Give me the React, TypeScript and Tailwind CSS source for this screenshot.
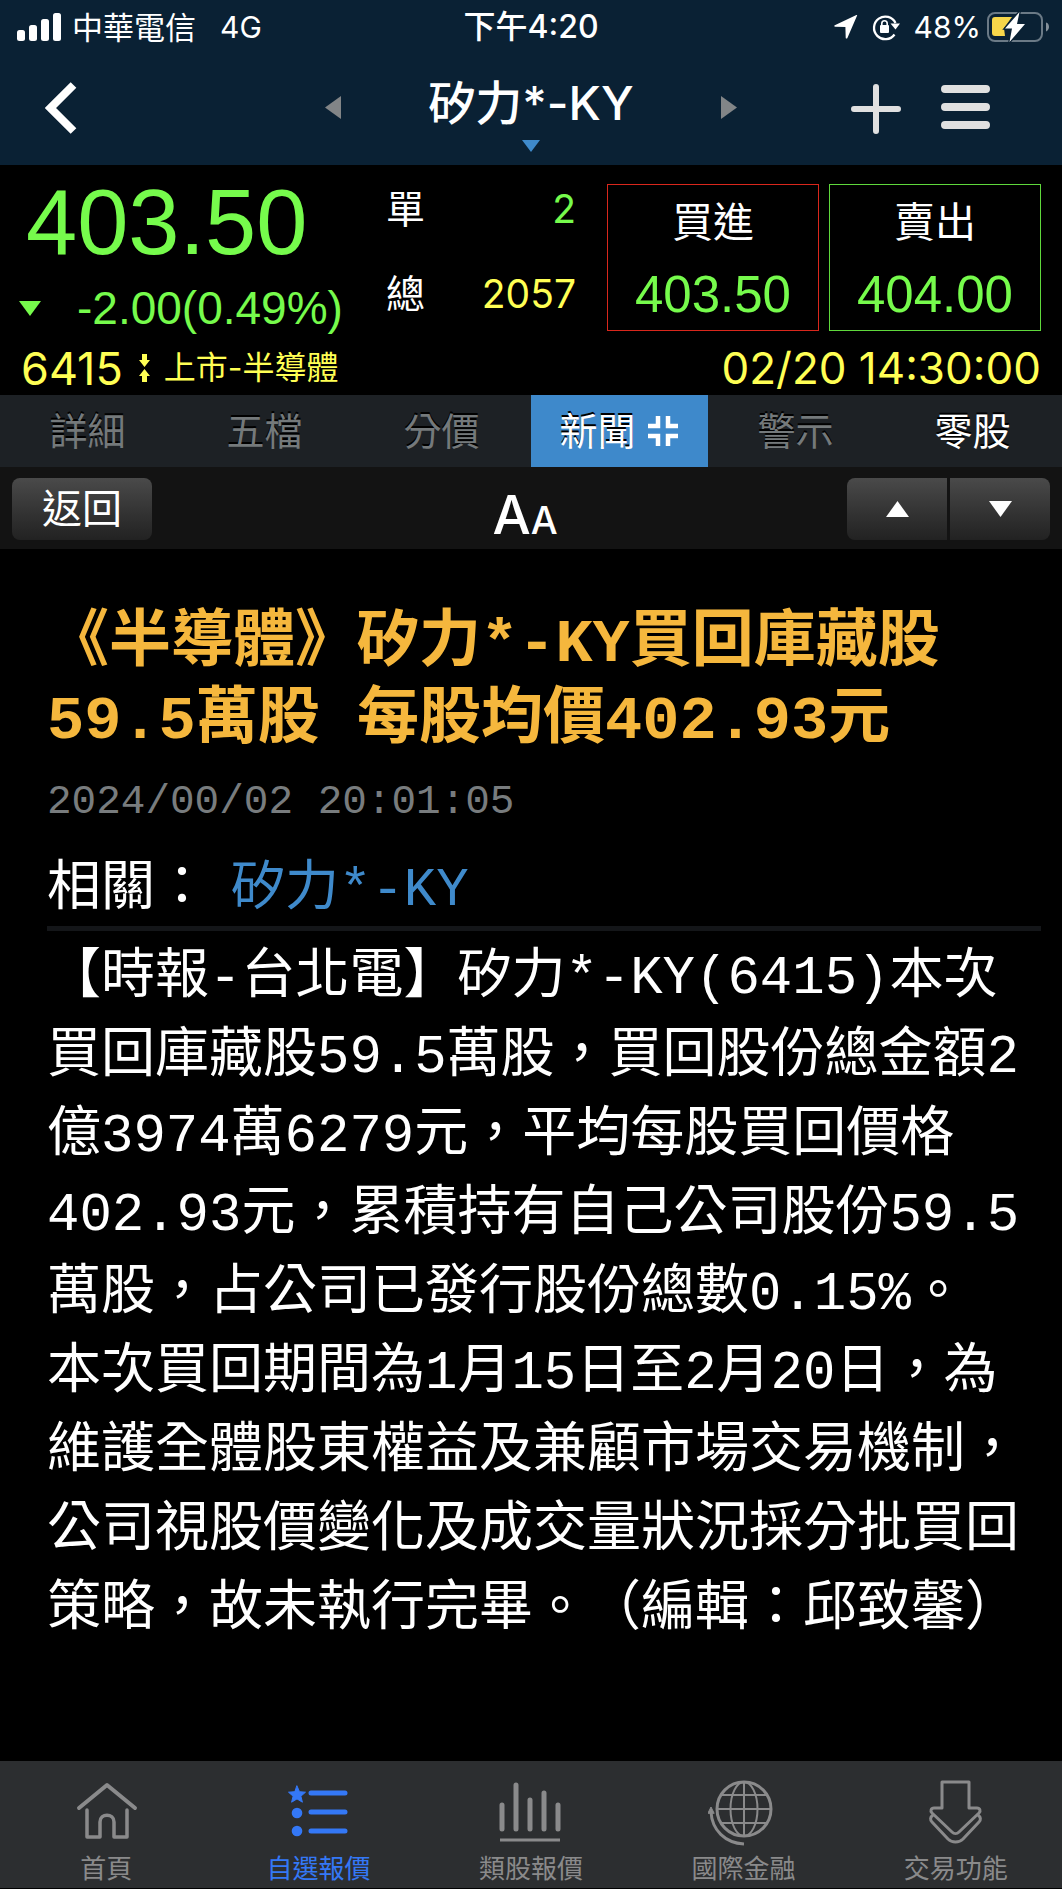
import type { ReactNode } from "react";

const TABS = [
  { label: "詳細", state: "idle" },
  { label: "五檔", state: "idle" },
  { label: "分價", state: "idle" },
  { label: "新聞", state: "active" },
  { label: "警示", state: "idle" },
  { label: "零股", state: "bright" },
];

function StatusBar() {
  return (
    <div className="grid h-[54px] grid-cols-[1fr_auto_1fr] items-center text-[31px] leading-none text-white">
      <div className="flex items-center pl-[17px]">
        <svg width="45" height="28" viewBox="0 0 45 28" fill="currentColor" className="mr-[10px]" aria-hidden="true">
          <rect x="0" y="17" width="8" height="11" rx="2.5" />
          <rect x="12" y="12" width="8" height="16" rx="2.5" />
          <rect x="24" y="6" width="8" height="22" rx="2.5" />
          <rect x="36" y="0" width="8" height="28" rx="2.5" />
        </svg>
        <span>中華電信</span>
        <span className="ml-6 text-[30px]">4G</span>
      </div>
      <div className="text-[32px] leading-none font-medium">下午4:20</div>
      <div className="flex items-center justify-end pr-3">
        <svg width="24" height="24" viewBox="0 0 24 24" fill="currentColor" className="mr-[14px]" aria-hidden="true">
          <path d="M23 .8c.4-.4 0-1-.6-.8L.8 10.2c-.8.4-.6 1.5.3 1.600l10.300.3.3 10.600c0 1 1.300 1.200 1.700.3z" />
        </svg>
        <svg width="28" height="28" viewBox="0 0 28 28" fill="none" stroke="currentColor" strokeWidth="2.3" className="mr-[14px]" aria-hidden="true">
          <path d="M22.500 21.500A11.300 11.300 0 1 1 23.500 10" />
          <path d="M18.500 10.500H28l-4.500 6z" fill="currentColor" stroke="none" />
          <rect x="8" y="12" width="9" height="8" rx="1" fill="currentColor" stroke="none" />
          <path d="M9.800 13v-2.600a2.700 2.700 0 0 1 5.400 0V13" strokeWidth="1.6" />
        </svg>
        <span className="mr-[6px] text-[30px]">48%</span>
        <svg width="63" height="32" viewBox="0 0 63 32" aria-hidden="true">
          <rect x="1" y="2" width="54" height="28" rx="7" fill="none" stroke="#6b7a86" strokeWidth="2" />
          <path d="M59 11.500c4 1 4 7.500 0 9z" fill="#84909a" />
          <path d="M8 6h17l-8 11 1 8H8c-2 0-3-1-3-3V9c0-2 1-3 3-3z" fill="#f7d64a" />
          <path d="M32.500 1 18 17.500h7L22.500 31 38 13h-8z" fill="#fff" stroke="#0a2134" strokeWidth="2.5" paintOrder="stroke" />
        </svg>
      </div>
    </div>
  );
}

function TitleBar() {
  return (
    <div className="relative grid h-[111px] grid-cols-[1fr_auto_1fr] items-start">
      <button type="button" aria-label="上一頁" className="ml-[45px] w-8 pt-[28px]">
        <svg width="32" height="52" viewBox="0 0 32 52" fill="none" stroke="#fff" strokeWidth="8" aria-hidden="true">
          <path d="M28.500 3 5.500 26l23 23" />
        </svg>
      </button>
      <div className="flex items-start">
        <button type="button" aria-label="前一檔" className="pt-[42px]">
          <svg width="16" height="23" viewBox="0 0 16 23" fill="#828587" aria-hidden="true">
            <path d="M0 11.500 16 0v23z" />
          </svg>
        </button>
        <h1 className="w-[380px] pt-[20px] text-center text-[47px] leading-[58px] font-medium text-white">矽力*-KY</h1>
        <button type="button" aria-label="後一檔" className="pt-[42px]">
          <svg width="16" height="23" viewBox="0 0 16 23" fill="#828587" aria-hidden="true">
            <path d="M16 11.500 0 0v23z" />
          </svg>
        </button>
      </div>
      <div className="flex justify-end gap-10 pt-[30px] pr-[72px]">
        <button type="button" aria-label="加入自選">
          <svg width="50" height="50" viewBox="0 0 50 50" stroke="#e0e0e0" strokeWidth="6" strokeLinecap="round" aria-hidden="true">
            <path d="M25 3v44M3 25h44" />
          </svg>
        </button>
        <button type="button" aria-label="選單">
          <svg width="49" height="50" viewBox="0 0 49 50" stroke="#e0e0e0" strokeWidth="8" strokeLinecap="round" aria-hidden="true">
            <path d="M4 5h41M4 23h41M4 41h41" />
          </svg>
        </button>
      </div>
      <svg width="18" height="12" viewBox="0 0 18 12" fill="#3f8acb" className="absolute bottom-[13px] left-1/2 -translate-x-1/2" aria-hidden="true">
        <path d="M0 0h18L9 12z" />
      </svg>
    </div>
  );
}

function PriceBox({ label, price, className }: { label: string; price: string; className: string }) {
  return (
    <button type="button" className={`flex h-[147px] flex-1 flex-col items-center border pt-[11px] ${className}`}>
      <span className="text-[41px] leading-[52px] text-white">{label}</span>
      <span className="mt-4 font-['Liberation_Sans',sans-serif] text-[51px] leading-[62px] text-[#76fb4c]">{price}</span>
    </button>
  );
}

function Quote() {
  return (
    <section className="h-[230px] pr-[21px]">
      <div className="flex pt-[19px]">
        <div className="w-[386px] font-['Liberation_Sans',sans-serif] text-[#76fb4c]">
          <div className="pl-[26px] text-[92px] leading-[76px]">403.50</div>
          <div className="mt-5 flex items-center pl-[19px] text-[46px] leading-[56px]">
            <svg width="22" height="15" viewBox="0 0 22 15" fill="currentColor" className="mr-9" aria-hidden="true">
              <path d="M0 0h22L11 15z" />
            </svg>
            -2.00(0.49%)
          </div>
        </div>
        <dl className="grid w-[190px] grid-cols-[auto_1fr] content-start gap-y-[35px] text-[39px] leading-[50px] text-white">
          <dt>單</dt>
          <dd className="text-right text-[#76fb4c]">2</dd>
          <dt>總</dt>
          <dd className="text-right text-[#ffff54]">2057</dd>
        </dl>
        <div className="ml-[31px] flex flex-1 gap-[10px]">
          <PriceBox label="買進" price="403.50" className="border-[#d9271c]" />
          <PriceBox label="賣出" price="404.00" className="border-[#5fd83c]" />
        </div>
      </div>
      <div className="mt-2 flex h-[48px] items-center pl-[21px] text-[#ffff54]">
        <span className="text-[45px] leading-none">6415</span>
        <svg width="11" height="28" viewBox="0 0 11 28" fill="currentColor" className="mr-[14px] ml-4" aria-hidden="true">
          <path d="M3 0h5v6h3l-5.500 7L0 6h3zM3 28h5v-6h3l-5.500-7L0 22h3z" />
        </svg>
        <span className="text-[32px] leading-none">上市-半導體</span>
        <time className="ml-auto text-[44px] leading-none">02/20 14:30:00</time>
      </div>
    </section>
  );
}

function Tabs() {
  return (
    <nav className="grid h-[72px] grid-cols-6 bg-[#1d2125]">
      {TABS.map((tab) => {
        const tone =
          tab.state === "active"
            ? "bg-[#3e89cb] text-white"
            : tab.state === "bright"
              ? "text-white"
              : "text-[#74797b]";
        return (
          <button
            key={tab.label}
            type="button"
            className={`flex items-center justify-center gap-3 pr-[2px] text-[38px] leading-none [text-shadow:0_-2px_0_#000] ${tone}`}
          >
            {tab.label}
            {tab.state === "active" ? (
              <svg width="30" height="30" viewBox="0 0 30 30" fill="none" stroke="currentColor" strokeWidth="4.5" aria-hidden="true">
                <path d="M10 0v10H0M20 0v10h10M10 30V20H0M20 30V20h10" />
              </svg>
            ) : null}
          </button>
        );
      })}
    </nav>
  );
}

function Toolbar() {
  const key = "flex h-[62px] items-center justify-center bg-linear-to-b from-[#4a4a4a] to-[#222] text-white";
  return (
    <div className="grid h-[82px] grid-cols-3 items-center bg-[#131313] px-3 pt-[2px]">
      <button type="button" className={`${key} w-[140px] rounded-lg text-[40px] leading-none`}>
        返回
      </button>
      <button type="button" aria-label="字體大小" className="flex items-baseline justify-self-center pt-3 pr-3 leading-none font-medium text-white">
        <span className="text-[54px] leading-none">A</span>
        <span className="text-[38px] leading-none">A</span>
      </button>
      <div className="flex gap-[3px] justify-self-end">
        <button type="button" aria-label="上一則" className={`${key} w-[100px] rounded-l-lg`}>
          <svg width="23" height="16" viewBox="0 0 23 16" fill="currentColor" aria-hidden="true">
            <path d="M0 16h23L11.500 0z" />
          </svg>
        </button>
        <button type="button" aria-label="下一則" className={`${key} w-[100px] rounded-r-lg`}>
          <svg width="23" height="16" viewBox="0 0 23 16" fill="currentColor" aria-hidden="true">
            <path d="M0 0h23L11.500 16z" />
          </svg>
        </button>
      </div>
    </div>
  );
}

function Article() {
  return (
    <article className="flex-1 pt-[57px] pr-[21px] pb-24 pl-[47px] font-['Liberation_Mono','Noto_Sans_CJK_TC',monospace] text-white [text-spacing-trim:space-all]">
      <h2 className="text-[62px] leading-[77px] font-bold text-[#f5b73d]">《半導體》矽力*-KY買回庫藏股59.5萬股 每股均價402.93元</h2>
      <time className="mt-3 block text-[41px] leading-[60px] text-[#787c7e]">2024/00/02 20:01:05</time>
      <div className="mt-6 flex gap-[22px] border-b-[5px] border-[#141619] text-[54px] leading-[70px]">
        <span>相關：</span>
        <a href="#related" className="text-[#3f8acb]">
          矽力*-KY
        </a>
      </div>
      <p className="mt-2 text-[54px] leading-[79px]">
        【時報-台北電】矽力*-KY(6415)本次買回庫藏股59.5萬股，買回股份總金額2億3974萬6279元，平均每股買回價格402.93元，累積持有自己公司股份59.5萬股，占公司已發行股份總數0.15%。
        <br />
        本次買回期間為1月15日至2月20日，為維護全體股東權益及兼顧市場交易機制，公司視股價變化及成交量狀況採分批買回策略，故未執行完畢。（編輯：邱致馨）
      </p>
    </article>
  );
}

function NavItem({ label, active, children }: { label: string; active?: boolean; children: ReactNode }) {
  return (
    <a href="#nav" className={`flex flex-col items-center pt-[19px] ${active ? "text-[#3478f6]" : "text-[#8a8a8b]"}`}>
      <svg width="70" height="66" viewBox="0 0 70 66" fill="none" stroke="currentColor" strokeLinecap="round" strokeLinejoin="round" aria-hidden="true">
        {children}
      </svg>
      <span className="mt-[6px] text-[26px] leading-[34px]">{label}</span>
    </a>
  );
}

function BottomNav() {
  return (
    <nav className="grid h-[128px] grid-cols-5 border-b border-black bg-[#2c2e30]">
      <NavItem label="首頁">
        <path d="M8 28 36 5l28 23" strokeWidth="4" />
        <path d="M16 30v27h13V42c0-9 14-9 14 0v15h13V30" strokeWidth="3.5" />
      </NavItem>
      <NavItem label="自選報價" active>
        <path d="m13 6 2.500 5.700 6 .5-4.600 4 1.500 6-5.400-3.300-5.400 3.300 1.500-6-4.600-4 6-.5z" fill="currentColor" strokeWidth="1" />
        <circle cx="13" cy="33" r="5.3" fill="currentColor" stroke="none" />
        <circle cx="13" cy="51" r="5.3" fill="currentColor" stroke="none" />
        <path d="M27 13h34M27 32h34M27 51h34" strokeWidth="5" />
      </NavItem>
      <NavItem label="類股報價">
        <path d="M6 25v24M20 5v44M34 20v29M48 13v36M62 25v24" strokeWidth="5" />
        <path d="M4 60h60" strokeWidth="3" strokeLinecap="butt" />
      </NavItem>
      <NavItem label="國際金融">
        <circle cx="36" cy="29" r="27" strokeWidth="3" />
        <ellipse cx="36" cy="29" rx="13.5" ry="27" strokeWidth="2" />
        <path d="M36 2v54M9 29h54M14 15h44M14 43h44" strokeWidth="2" />
        <path d="M3 32c1 18 14 31 33 32" strokeWidth="3" strokeLinecap="butt" />
        <path d="M0 33 3 27l3 6z" fill="currentColor" strokeWidth="1" />
      </NavItem>
      <NavItem label="交易功能">
        <path d="M21 2h27v26h8c3 0 4 3 2 5L38 52c-2 2-5 2-7 0L11 33c-2-2-1-5 2-5h8z" strokeWidth="3" />
        <path d="M12 35c-3 2-3 5-1 7l16 17c4 4 11 4 15 0l16-17c2-2 2-5-1-7" strokeWidth="3" />
      </NavItem>
    </nav>
  );
}

export default function App() {
  return (
    <div lang="zh-Hant" className="flex min-h-screen flex-col bg-black font-['Inter','Noto_Sans_CJK_TC',sans-serif]">
      <header className="bg-[#0a2134]">
        <StatusBar />
        <TitleBar />
      </header>
      <Quote />
      <Tabs />
      <Toolbar />
      <Article />
      <BottomNav />
    </div>
  );
}
